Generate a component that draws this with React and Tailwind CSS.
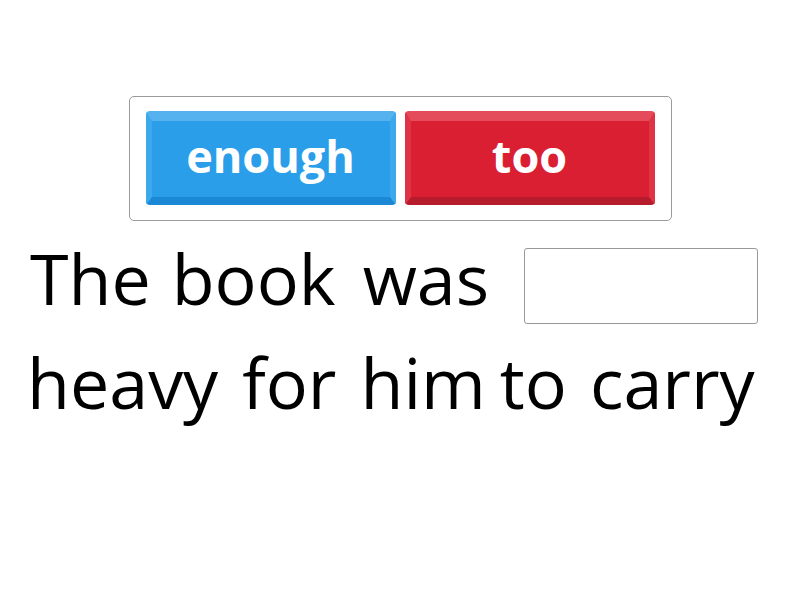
export default function App() {
  const font = { fontFamily: '"Open Sans", "Liberation Sans", sans-serif' };
  const word = "leading-[70px] whitespace-nowrap";
  return (
    <div className="w-[800px] h-[600px] bg-white flex flex-col items-center text-black" style={font}>
      {/* answer tiles */}
      <div className="mt-[96px] w-[543px] h-[125px] border border-[#9a9a9a] rounded-[5px] pl-4 pt-[14px] flex gap-[9px]">
        <button className="w-[250px] h-[94px] rounded-[4px] bg-[#2a9ee9] border-t-[10px] border-x-[6px] border-b-[8px] border-t-[#55b2ee] border-x-[#3da8ec] border-b-[#1a88d4] text-white font-bold text-[45px] leading-none flex items-center justify-center pb-[8px]">
          enough
        </button>
        <button className="w-[250px] h-[94px] rounded-[4px] bg-[#da1f33] border-t-[10px] border-x-[6px] border-b-[8px] border-t-[#e44c5c] border-x-[#df3446] border-b-[#b71c2c] text-white font-bold text-[45px] leading-none flex items-center justify-center pb-[8px]">
          too
        </button>
      </div>

      {/* sentence with the blank */}
      <div className="self-stretch text-[70px]">
        <div className="mt-[22px] pl-[30px] flex items-start">
          <span className={word}>The</span>
          <span className={`${word} ml-[21px]`}>book</span>
          <span className={`${word} ml-[27px]`}>was</span>
          <span className="ml-[35px] mt-[5px] w-[234px] h-[76px] border border-[#999] rounded-[3px] bg-white"></span>
        </div>
        <div className="mt-[23px] pl-[27px] flex items-start">
          <span className={word}>heavy</span>
          <span className={`${word} ml-[24px]`}>for</span>
          <span className={`${word} ml-[24px]`}>him</span>
          <span className={`${word} ml-[14px]`}>to</span>
          <span className={`${word} ml-[23px]`}>carry</span>
        </div>
      </div>
    </div>
  );
}
